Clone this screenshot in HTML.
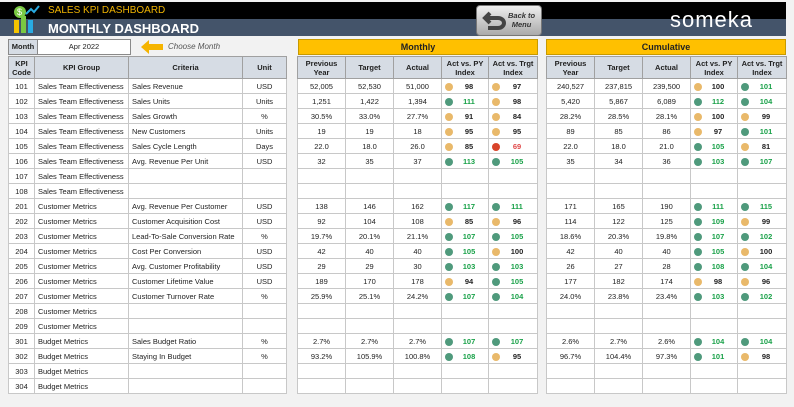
<!DOCTYPE html><html><head><style>
body{margin:0;width:794px;height:407px;background:#f2f2f2;font-family:"Liberation Sans",sans-serif;font-size:7.5px;color:#222;position:relative;overflow:hidden}
.a{position:absolute}
table{border-collapse:collapse;table-layout:fixed;background:#fff;position:absolute;top:56px}
td,th{border:1px solid #c8c8c8;height:14px;padding:0 3px;white-space:nowrap;overflow:hidden;text-align:center}
th{background:#d6dce4;height:21px;font-weight:bold;line-height:9px;border-color:#a0a0a0}
table{border:1.5px solid #909090}
tr.s td{border-top:1.5px solid #808080}
td.l{text-align:left}
td i{display:inline-block;width:8px;height:8px;border-radius:50%;vertical-align:-1px;float:left;margin-top:1px}
.o i{background:#e9b96a}.g i{background:#4f9a7c}.r i{background:#d8442a}
.g{color:#18a148;font-weight:bold}.o{font-weight:bold}.r{color:#e04848;font-weight:bold}
.hd{position:absolute;top:39px;height:14px;background:#ffc000;border:1px solid #c79a00;font-weight:bold;font-size:9px;text-align:center;line-height:14px;width:238px}
</style></head><body>
<div class="a" style="left:0;top:2px;width:786px;height:17px;background:#000"></div>
<div class="a" style="left:0;top:19px;width:786px;height:17px;background:#44546a"></div>
<svg class="a" style="left:12px;top:4px" width="28" height="30"><rect x="2" y="16" width="5" height="13" fill="#f5c400"/><rect x="9" y="12" width="5" height="17" fill="#7ac943"/><rect x="16" y="16" width="5" height="13" fill="#29abe2"/><circle cx="8" cy="8" r="6" fill="#7ac943"/><text x="5" y="11" font-size="9" fill="#fff" font-family="Liberation Sans">$</text><path d="M14 10 L19 5 L22 8 L27 2" stroke="#29abe2" stroke-width="2" fill="none"/></svg>
<div class="a" style="left:48px;top:5px;color:#f0b400;font-size:10px">SALES KPI DASHBOARD</div>
<div class="a" style="left:48px;top:21px;color:#fff;font-size:13px;font-weight:bold">MONTHLY DASHBOARD</div>
<div class="a" style="left:476px;top:5px;width:64px;height:29px;border-radius:4px;background:linear-gradient(#eee,#aaa);border:1px solid #777"></div>
<svg class="a" style="left:482px;top:9px" width="26" height="22"><path d="M8 4 L3 9 L8 14 M3 9 H16 A6 5 0 0 1 16 19 H6" stroke="#444" stroke-width="4" fill="none"/></svg>
<div class="a" style="left:508px;top:11px;font-size:7.5px;font-style:italic;font-weight:bold;text-align:center;line-height:9px;color:#333">Back to<br>Menu</div>
<div class="a" style="left:670px;top:7px;color:#fff;font-size:22px;letter-spacing:1px">someka</div>
<div class="a" style="left:8px;top:39px;width:28px;height:14px;background:#d6dce4;border:1px solid #8a8a8a;font-weight:bold;line-height:14px;text-align:center">Month</div>
<div class="a" style="left:37px;top:39px;width:92px;height:14px;background:#fff;border:1px solid #8a8a8a;line-height:14px;text-align:center">Apr 2022</div>
<svg class="a" style="left:141px;top:40px" width="24" height="14"><path d="M0 7 L8 0 V4 H22 V10 H8 V14 Z" fill="#f5b400"/></svg>
<div class="a" style="left:168px;top:42px;font-style:italic;color:#555;font-size:8px">Choose Month</div>
<div class="hd" style="left:298px">Monthly</div>
<div class="hd" style="left:546px">Cumulative</div>

<table style="left:8px;width:278px"><colgroup><col style="width:26px"><col style="width:94px"><col style="width:114px"><col style="width:44px"></colgroup>
<tr><th>KPI<br>Code</th><th>KPI Group</th><th>Criteria</th><th>Unit</th></tr>
<tr><td>101</td><td class="l">Sales Team Effectiveness</td><td class="l">Sales Revenue</td><td>USD</td></tr>
<tr><td>102</td><td class="l">Sales Team Effectiveness</td><td class="l">Sales Units</td><td>Units</td></tr>
<tr><td>103</td><td class="l">Sales Team Effectiveness</td><td class="l">Sales Growth</td><td>%</td></tr>
<tr><td>104</td><td class="l">Sales Team Effectiveness</td><td class="l">New Customers</td><td>Units</td></tr>
<tr><td>105</td><td class="l">Sales Team Effectiveness</td><td class="l">Sales Cycle Length</td><td>Days</td></tr>
<tr><td>106</td><td class="l">Sales Team Effectiveness</td><td class="l">Avg. Revenue Per Unit</td><td>USD</td></tr>
<tr><td>107</td><td class="l">Sales Team Effectiveness</td><td></td><td></td></tr>
<tr><td>108</td><td class="l">Sales Team Effectiveness</td><td></td><td></td></tr>
<tr class="s"><td>201</td><td class="l">Customer Metrics</td><td class="l">Avg. Revenue Per Customer</td><td>USD</td></tr>
<tr><td>202</td><td class="l">Customer Metrics</td><td class="l">Customer Acquisition Cost</td><td>USD</td></tr>
<tr><td>203</td><td class="l">Customer Metrics</td><td class="l">Lead-To-Sale Conversion Rate</td><td>%</td></tr>
<tr><td>204</td><td class="l">Customer Metrics</td><td class="l">Cost Per Conversion</td><td>USD</td></tr>
<tr><td>205</td><td class="l">Customer Metrics</td><td class="l">Avg. Customer Profitability</td><td>USD</td></tr>
<tr><td>206</td><td class="l">Customer Metrics</td><td class="l">Customer Lifetime Value</td><td>USD</td></tr>
<tr><td>207</td><td class="l">Customer Metrics</td><td class="l">Customer Turnover Rate</td><td>%</td></tr>
<tr><td>208</td><td class="l">Customer Metrics</td><td></td><td></td></tr>
<tr><td>209</td><td class="l">Customer Metrics</td><td></td><td></td></tr>
<tr class="s"><td>301</td><td class="l">Budget Metrics</td><td class="l">Sales Budget Ratio</td><td>%</td></tr>
<tr><td>302</td><td class="l">Budget Metrics</td><td class="l">Staying In Budget</td><td>%</td></tr>
<tr><td>303</td><td class="l">Budget Metrics</td><td></td><td></td></tr>
<tr><td>304</td><td class="l">Budget Metrics</td><td></td><td></td></tr>
</table>

<table style="left:297px;width:240px"><colgroup><col style="width:48px"><col style="width:48px"><col style="width:48px"><col style="width:47px"><col style="width:49px"></colgroup>
<tr><th>Previous<br>Year</th><th>Target</th><th>Actual</th><th>Act vs. PY<br>Index</th><th>Act vs. Trgt<br>Index</th></tr>
<tr><td>52,005</td><td>52,530</td><td>51,000</td><td class="o"><i></i>98</td><td class="o"><i></i>97</td></tr>
<tr><td>1,251</td><td>1,422</td><td>1,394</td><td class="g"><i></i>111</td><td class="o"><i></i>98</td></tr>
<tr><td>30.5%</td><td>33.0%</td><td>27.7%</td><td class="o"><i></i>91</td><td class="o"><i></i>84</td></tr>
<tr><td>19</td><td>19</td><td>18</td><td class="o"><i></i>95</td><td class="o"><i></i>95</td></tr>
<tr><td>22.0</td><td>18.0</td><td>26.0</td><td class="o"><i></i>85</td><td class="r"><i></i>69</td></tr>
<tr><td>32</td><td>35</td><td>37</td><td class="g"><i></i>113</td><td class="g"><i></i>105</td></tr>
<tr><td></td><td></td><td></td><td></td><td></td></tr>
<tr><td></td><td></td><td></td><td></td><td></td></tr>
<tr class="s"><td>138</td><td>146</td><td>162</td><td class="g"><i></i>117</td><td class="g"><i></i>111</td></tr>
<tr><td>92</td><td>104</td><td>108</td><td class="o"><i></i>85</td><td class="o"><i></i>96</td></tr>
<tr><td>19.7%</td><td>20.1%</td><td>21.1%</td><td class="g"><i></i>107</td><td class="g"><i></i>105</td></tr>
<tr><td>42</td><td>40</td><td>40</td><td class="g"><i></i>105</td><td class="o"><i></i>100</td></tr>
<tr><td>29</td><td>29</td><td>30</td><td class="g"><i></i>103</td><td class="g"><i></i>103</td></tr>
<tr><td>189</td><td>170</td><td>178</td><td class="o"><i></i>94</td><td class="g"><i></i>105</td></tr>
<tr><td>25.9%</td><td>25.1%</td><td>24.2%</td><td class="g"><i></i>107</td><td class="g"><i></i>104</td></tr>
<tr><td></td><td></td><td></td><td></td><td></td></tr>
<tr><td></td><td></td><td></td><td></td><td></td></tr>
<tr class="s"><td>2.7%</td><td>2.7%</td><td>2.7%</td><td class="g"><i></i>107</td><td class="g"><i></i>107</td></tr>
<tr><td>93.2%</td><td>105.9%</td><td>100.8%</td><td class="g"><i></i>108</td><td class="o"><i></i>95</td></tr>
<tr><td></td><td></td><td></td><td></td><td></td></tr>
<tr><td></td><td></td><td></td><td></td><td></td></tr>
</table>

<table style="left:546px;width:240px"><colgroup><col style="width:48px"><col style="width:48px"><col style="width:48px"><col style="width:47px"><col style="width:49px"></colgroup>
<tr><th>Previous<br>Year</th><th>Target</th><th>Actual</th><th>Act vs. PY<br>Index</th><th>Act vs. Trgt<br>Index</th></tr>
<tr><td>240,527</td><td>237,815</td><td>239,500</td><td class="o"><i></i>100</td><td class="g"><i></i>101</td></tr>
<tr><td>5,420</td><td>5,867</td><td>6,089</td><td class="g"><i></i>112</td><td class="g"><i></i>104</td></tr>
<tr><td>28.2%</td><td>28.5%</td><td>28.1%</td><td class="o"><i></i>100</td><td class="o"><i></i>99</td></tr>
<tr><td>89</td><td>85</td><td>86</td><td class="o"><i></i>97</td><td class="g"><i></i>101</td></tr>
<tr><td>22.0</td><td>18.0</td><td>21.0</td><td class="g"><i></i>105</td><td class="o"><i></i>81</td></tr>
<tr><td>35</td><td>34</td><td>36</td><td class="g"><i></i>103</td><td class="g"><i></i>107</td></tr>
<tr><td></td><td></td><td></td><td></td><td></td></tr>
<tr><td></td><td></td><td></td><td></td><td></td></tr>
<tr class="s"><td>171</td><td>165</td><td>190</td><td class="g"><i></i>111</td><td class="g"><i></i>115</td></tr>
<tr><td>114</td><td>122</td><td>125</td><td class="g"><i></i>109</td><td class="o"><i></i>99</td></tr>
<tr><td>18.6%</td><td>20.3%</td><td>19.8%</td><td class="g"><i></i>107</td><td class="g"><i></i>102</td></tr>
<tr><td>42</td><td>40</td><td>40</td><td class="g"><i></i>105</td><td class="o"><i></i>100</td></tr>
<tr><td>26</td><td>27</td><td>28</td><td class="g"><i></i>108</td><td class="g"><i></i>104</td></tr>
<tr><td>177</td><td>182</td><td>174</td><td class="o"><i></i>98</td><td class="o"><i></i>96</td></tr>
<tr><td>24.0%</td><td>23.8%</td><td>23.4%</td><td class="g"><i></i>103</td><td class="g"><i></i>102</td></tr>
<tr><td></td><td></td><td></td><td></td><td></td></tr>
<tr><td></td><td></td><td></td><td></td><td></td></tr>
<tr class="s"><td>2.6%</td><td>2.7%</td><td>2.6%</td><td class="g"><i></i>104</td><td class="g"><i></i>104</td></tr>
<tr><td>96.7%</td><td>104.4%</td><td>97.3%</td><td class="g"><i></i>101</td><td class="o"><i></i>98</td></tr>
<tr><td></td><td></td><td></td><td></td><td></td></tr>
<tr><td></td><td></td><td></td><td></td><td></td></tr>
</table>
</body></html>
